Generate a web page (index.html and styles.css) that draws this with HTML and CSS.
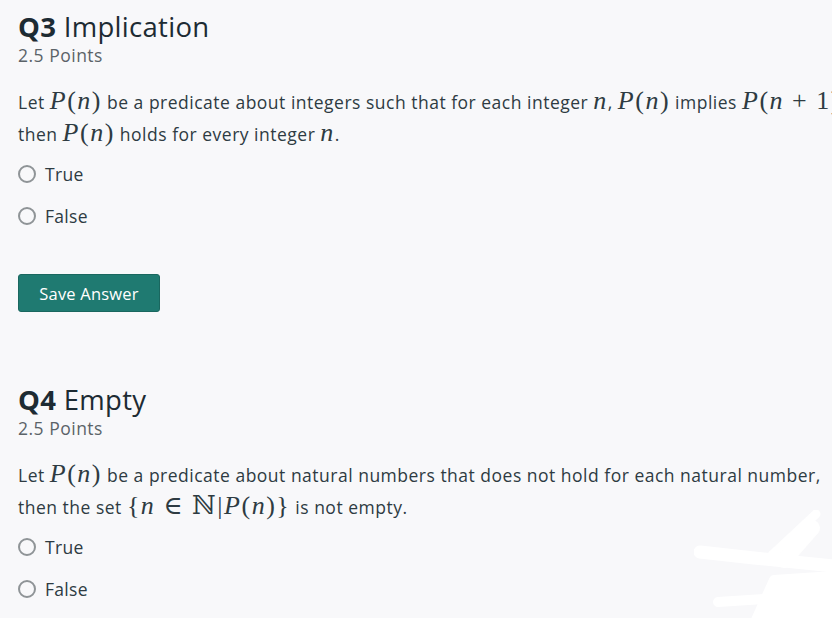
FILE: index.html
```html
<!DOCTYPE html>
<html lang="en">
<head>
  <meta charset="UTF-8">
  <title>Assignment</title>
  <link rel="stylesheet" href="styles.css">
</head>
<body>

<div class="question">
  <h2 class="q-title"><b>Q3</b> Implication</h2>
  <div class="q-points">2.5 Points</div>
  <p class="q-text">
    Let <span class="math"><i>P</i>(<i>n</i>)</span> be a predicate about integers such that for each integer <span class="math"><i>n</i></span>, <span class="math"><i>P</i>(<i>n</i>)</span> implies <span class="math"><i>P</i>(<i>n</i> + 1)</span>,<br>
    then <span class="math"><i>P</i>(<i>n</i>)</span> holds for every integer <span class="math"><i>n</i></span>.
  </p>
  <div class="options">
    <label class="option"><span class="radio"></span>True</label>
    <label class="option"><span class="radio"></span>False</label>
  </div>
  <button class="save-button">Save Answer</button>
</div>

<div class="question">
  <h2 class="q-title"><b>Q4</b> Empty</h2>
  <div class="q-points">2.5 Points</div>
  <p class="q-text">
    Let <span class="math"><i>P</i>(<i>n</i>)</span> be a predicate about natural numbers that does not hold for each natural number,<br>
    then the set <span class="math">{<i>n</i> ∈ ℕ|<i>P</i>(<i>n</i>)}</span> is not empty.
  </p>
  <div class="options">
    <label class="option"><span class="radio"></span>True</label>
    <label class="option"><span class="radio"></span>False</label>
  </div>
</div>

<!-- trace blanche en bas a droite -->
<svg class="smudge" width="140" height="110" viewBox="0 0 140 110">
  <g fill="none" stroke="#fff" stroke-linecap="round" stroke-linejoin="round">
    <path d="M122 4 L78 45" stroke-width="9"/>
    <path d="M118 18 L90 50" stroke-width="16"/>
    <path d="M6 42 L60 48 L140 56" stroke-width="13"/>
    <path d="M80 70 L140 66 L140 110 L62 110 Z" fill="#fff" stroke-width="10"/>
    <path d="M24 92 L84 88" stroke-width="10"/>
  </g>
</svg>

</body>
</html>
```

FILE: styles.css
```css
/* Page */
body {
  margin: 0;
  padding: 10px 0 0 18px;
  background: #f8f8fa;
  font-family: "Open Sans", "Liberation Sans", sans-serif;
  color: #2e3b42;
  overflow: hidden;
  height: 618px;
  box-sizing: border-box;
}
.question {
  margin-bottom: 71px;
}
/* Titre */
.q-title {
  margin: 0;
  font-size: 27.5px;
  line-height: 34px;
  font-weight: normal;
  letter-spacing: 0.3px;
  color: #1d2b33;
}
.q-title b {
  font-weight: bold;
}
.q-points {
  font-size: 17.5px;
  line-height: 22px;
  letter-spacing: 0.5px;
  color: #5b6368;
}
/* Enonce */
.q-text {
  margin: 20px 0 0 0;
  font-size: 17.5px;
  line-height: 32px;
  letter-spacing: 0.5px;
  white-space: nowrap;
}
.math {
  font-family: "Liberation Serif", "DejaVu Serif", serif;
  font-size: 26px;
  line-height: 1;
  letter-spacing: 1.5px;
}
/* Choix */
.options {
  margin-top: 3px;
}
.option {
  display: flex;
  align-items: center;
  height: 42px;
  font-size: 17.5px;
  letter-spacing: 0.3px;
}
.radio {
  width: 14px;
  height: 14px;
  border: 2.5px solid #8f9497;
  border-radius: 50%;
  margin-right: 9px;
}
/* Bouton */
.save-button {
  margin-top: 37px;
  width: 142px;
  height: 38px;
  background-color: #1f7a71;
  border: 1px solid #1a675f;
  border-radius: 3px;
  color: #fff;
  font-family: "Open Sans", sans-serif;
  font-size: 16.5px;
  letter-spacing: 0.2px;
  padding: 0;
}
.smudge {
  position: absolute;
  left: 694px;
  top: 510px;
}
```
